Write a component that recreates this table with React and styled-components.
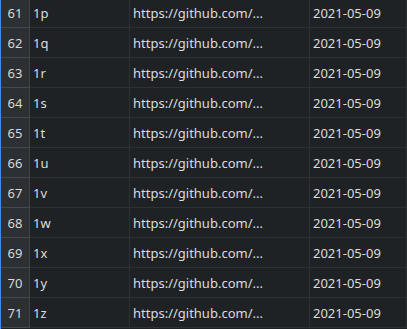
import React from "react";
import styled, { createGlobalStyle } from "styled-components";

const Global = createGlobalStyle`
  html, body { margin: 0; padding: 0; background: #1f2225; overflow: hidden; }
  body { font-family: "Noto Sans", "Open Sans", sans-serif; }
`;

const Viewport = styled.div`
  width: 407px;
  height: 329px;
  overflow: hidden;
  background: #1f2225;
  border-left: 1px solid #3a8ee6;
  box-sizing: border-box;
`;

const Grid = styled.div`
  display: grid;
  grid-template-columns: 29px 100px 180px 1fr;
  grid-auto-rows: 30px;
  margin-top: -2px;
`;

const Cell = styled.div`
  display: flex;
  align-items: center;
  box-sizing: border-box;
  padding: 0 3px;
  border-right: 1px solid #2d3034;
  border-bottom: 1px solid #2d3034;
  color: #dcdcdc;
  font-size: 13px;
  white-space: nowrap;
  overflow: hidden;
`;

const RowNum = styled(Cell)`
  justify-content: center;
  padding: 0;
  background: #2c2f33;
  border-right: 1px solid #3f4246;
  border-bottom: 1px solid #45484c;
  color: #d8d8d8;
`;

const rows = "pqrstuvwxyz".split("").map((c, i) => ({ n: 61 + i, name: "1" + c }));

export default function App() {
  return (
    <>
      <Global />
      <Viewport>
        <Grid>
          {rows.map((r) => (
            <React.Fragment key={r.n}>
              <RowNum>{r.n}</RowNum>
              <Cell>{r.name}</Cell>
              <Cell>https://github.com/...</Cell>
              <Cell>2021-05-09</Cell>
            </React.Fragment>
          ))}
        </Grid>
      </Viewport>
    </>
  );
}
